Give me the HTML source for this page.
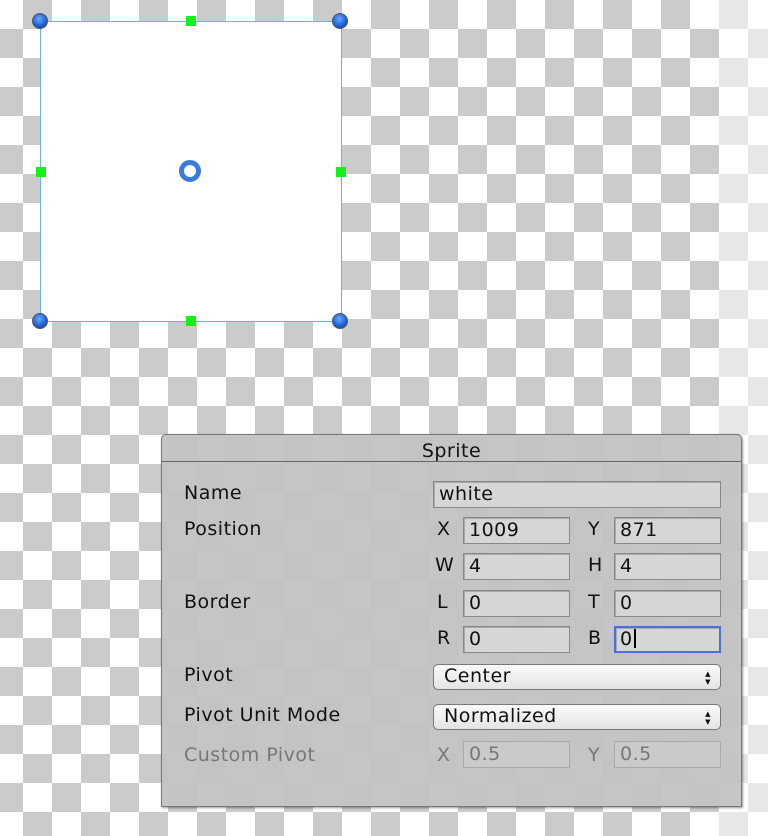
<!DOCTYPE html>
<html><head><meta charset="utf-8"><style>
body{margin:0;width:768px;height:836px;overflow:hidden;position:relative;font-family:"DejaVu Sans","Liberation Sans",sans-serif;letter-spacing:.5px;
background:repeating-conic-gradient(#cbcbcb 0 25%,#fff 0 50%);background-size:58px 58px;background-position:-6px 0;}
.a{position:absolute}
.strip{left:719px;top:0;width:49px;height:836px;background:rgba(255,255,255,.55)}
.spr{left:40px;top:21px;width:300px;height:299px;background:#fff;border:1px solid #6cb4e0}
.c{width:16px;height:16px;border-radius:50%;background:radial-gradient(circle at 45% 35%,#6aa8ff,#1a5fd0 60%,#123f8a);border:1px solid #556;box-sizing:border-box}
.g{width:10px;height:10px;background:#16f01a}
.panel{left:161px;top:434px;width:579px;height:371px;background:rgba(194,194,194,.95);border:1px solid #777;border-radius:5px 5px 0 0;box-shadow:1px 1px 2px rgba(0,0,0,.4)}
.title{left:0;top:0;width:579px;height:26px;border-bottom:1px solid #666;text-align:center;font-size:19px;line-height:33px;color:#111}
.l{font-size:19px;color:#111;left:22px}
.f{background:#d6d6d6;border:1px solid #888;box-shadow:inset 1px 1px 0 #aaa;box-sizing:border-box;font-size:19px;line-height:25px;padding-left:5px;color:#111;height:27px}
.sl{font-size:19px;color:#111}
.dd{background:linear-gradient(#fafafa,#e4e4e4);border:1px solid #777;border-radius:5px;box-sizing:border-box;height:26px;font-size:19px;line-height:23px;padding-left:10px;color:#111;width:288px;left:271px}
.dd span{position:absolute;right:9px;font-size:7px;line-height:8px;top:5px}
.dis{color:#777}
</style></head><body>
<div class="a strip"></div>
<div class="a spr"></div>
<div class="a c" style="left:32px;top:13px"></div>
<div class="a c" style="left:332px;top:13px"></div>
<div class="a c" style="left:32px;top:313px"></div>
<div class="a c" style="left:332px;top:313px"></div>
<div class="a g" style="left:186px;top:16px"></div>
<div class="a g" style="left:186px;top:316px"></div>
<div class="a g" style="left:36px;top:167px"></div>
<div class="a g" style="left:336px;top:167px"></div>
<div class="a" style="left:179px;top:160px;width:22px;height:22px;border-radius:50%;box-sizing:border-box;border:5px solid #3a7ad8;background:#fff"></div>
<div class="a panel">
<div class="a title">Sprite</div>
<div class="a l" style="top:47px">Name</div>
<div class="a l" style="top:83px">Position</div>
<div class="a l" style="top:156px">Border</div>
<div class="a l" style="top:229px">Pivot</div>
<div class="a l" style="top:269px">Pivot Unit Mode</div>
<div class="a l dis" style="top:309px">Custom Pivot</div>
<div class="a f" style="left:271px;top:46px;width:288px">white</div>

<div class="a sl" style="left:275px;top:83px">X</div><div class="a f" style="left:301px;top:82px;width:107px">1009</div>
<div class="a sl" style="left:426px;top:83px">Y</div><div class="a f" style="left:452px;top:82px;width:107px">871</div>
<div class="a sl" style="left:273px;top:119px">W</div><div class="a f" style="left:301px;top:118px;width:107px">4</div>
<div class="a sl" style="left:426px;top:119px">H</div><div class="a f" style="left:452px;top:118px;width:107px">4</div>
<div class="a sl" style="left:275px;top:156px">L</div><div class="a f" style="left:301px;top:155px;width:107px">0</div>
<div class="a sl" style="left:426px;top:156px">T</div><div class="a f" style="left:452px;top:155px;width:107px">0</div>
<div class="a sl" style="left:275px;top:192px">R</div><div class="a f" style="left:301px;top:191px;width:107px">0</div>
<div class="a sl" style="left:426px;top:192px">B</div><div class="a f" style="left:452px;top:191px;width:107px;border:2px solid #4a70e0;padding-left:4px;line-height:23px">0<span style="display:inline-block;width:2px;height:19px;background:#000;vertical-align:-3px;margin-left:1px"></span></div>
<div class="a dd" style="top:229px">Center<span>▲<br>▼</span></div>
<div class="a dd" style="top:269px">Normalized<span>▲<br>▼</span></div>
<div class="a sl dis" style="left:275px;top:309px">X</div><div class="a f dis" style="left:301px;top:306px;width:107px;background:#cacaca;border-color:#aaa;box-shadow:none">0.5</div>
<div class="a sl dis" style="left:426px;top:309px">Y</div><div class="a f dis" style="left:452px;top:306px;width:107px;background:#cacaca;border-color:#aaa;box-shadow:none">0.5</div>
</div>
</body></html>
